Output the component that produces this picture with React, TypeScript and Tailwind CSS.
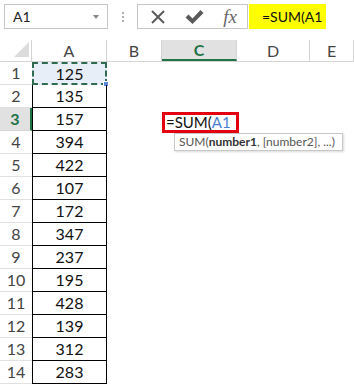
const values = [125, 135, 157, 394, 422, 107, 172, 347, 237, 195, 428, 139, 312, 283];

const font = { fontFamily: "Lato, 'Open Sans', sans-serif" };

const XIcon = () => (
  <svg width="16" height="16" viewBox="0 0 16 16" fill="none" stroke="#5a5a5a" strokeWidth="2">
    <path d="M2 2 L14 14 M14 2 L2 14" />
  </svg>
);

const CheckIcon = () => (
  <svg width="19" height="16" viewBox="0 0 19 16" fill="#5a5a5a">
    <path d="M0.5 8.5 L3.5 5.5 L7.5 9.5 L15.5 1 L18.5 4 L7.5 15 Z" />
  </svg>
);

const FormulaBar = () => (
  <div className="flex h-[40px] items-start pt-[4px] pl-[4px]">
    <div className="flex h-[25px] w-[104px] items-center justify-between border border-[#c6c6c6] pl-[8px] pr-[8px] text-[14px] text-[#222]">
      <span>A1</span>
      <span className="h-0 w-0 border-x-[3px] border-t-[4px] border-x-transparent border-t-[#888]" />
    </div>
    <div className="flex h-[25px] w-[29px] flex-col items-center justify-center gap-[2px]">
      <span className="h-[2px] w-[2px] bg-[#b0b0b0]" />
      <span className="h-[2px] w-[2px] bg-[#b0b0b0]" />
      <span className="h-[2px] w-[2px] bg-[#b0b0b0]" />
    </div>
    <div className="flex h-[25px] w-[111px] items-center justify-between border border-[#c6c6c6] pl-[12px] pr-[10px]">
      <XIcon />
      <CheckIcon />
      <span className="text-[19px] italic leading-none text-[#666]" style={{ fontFamily: "'Liberation Serif', serif" }}>
        fx
      </span>
    </div>
    <div className="ml-[1px] flex h-[25px] w-[77px] items-center bg-[#ffff00] pl-[13px] text-[14px] text-[#111]">
      =SUM(A1
    </div>
  </div>
);

const colHeaders = [
  { l: "A", w: "w-[75px]" },
  { l: "B", w: "w-[55px]" },
  { l: "C", w: "w-[75px]" },
  { l: "D", w: "w-[73px]" },
  { l: "E", w: "w-[44px]" },
];

const HeaderRow = () => (
  <div className="flex h-[22px] border-b border-[#d4d4d4]">
    <div className="relative w-[32px] border-r border-[#d4d4d4]">
      <div className="absolute bottom-[4px] right-[2px] h-0 w-0 border-b-[15px] border-l-[15px] border-b-[#dcdcdc] border-l-transparent" />
    </div>
    {colHeaders.map((c) =>
      c.l === "C" ? (
        <div
          key={c.l}
          className={`${c.w} flex items-center justify-center border-b-2 border-r border-[#217346] border-r-[#d4d4d4] bg-[#e1e1e1] text-[16px] font-bold text-[#217346]`}
        >
          {c.l}
        </div>
      ) : (
        <div
          key={c.l}
          className={`${c.w} flex items-center justify-center border-r border-[#d4d4d4] text-[16px] text-[#444]`}
        >
          {c.l}
        </div>
      )
    )}
  </div>
);

export default function App() {
  return (
    <div className="h-[389px] w-[354px] overflow-hidden bg-white" style={font}>
      <FormulaBar />
      <HeaderRow />
      {values.map((v, i) => {
        const n = i + 1;
        const active = n === 3;
        const sel = n === 1;
        return (
          <div key={n} className="relative flex h-[23px]">
            <div
              className={
                active
                  ? "flex w-[32px] items-center justify-center border-b border-r-2 border-[#d4d4d4] border-r-[#217346] bg-[#e1e1e1] text-[16px] font-bold text-[#217346]"
                  : "flex w-[32px] items-center justify-center border-b border-[#e1e1e1] text-[16px] text-[#444]"
              }
            >
              {n}
            </div>
            {sel ? (
              <div className="relative flex w-[75px] items-center justify-center border-2 border-dashed border-[#2f6b4f] bg-[#e8eef8] text-[16px] text-[#111]">
                {v}
                <span className="absolute -bottom-[4px] -right-[4px] h-[6px] w-[6px] border border-white bg-[#5b8bd8]" />
              </div>
            ) : (
              <div className="flex w-[75px] items-center justify-center border-x border-b border-black text-[16px] text-[#111]">
                {v}
              </div>
            )}
            {active && (
              <>
                <div className="absolute left-[162px] top-[4px] flex h-[21px] w-[77px] items-center whitespace-nowrap border-[3px] border-[#e3000f] bg-white pl-[1px] text-[15px] leading-none text-[#111]">
                  =SUM(<span className="text-[#4a7fd6]">A1</span>
                </div>
                <div className="absolute left-[174px] top-[25px] z-10 flex h-[18px] w-[169px] items-center whitespace-nowrap border border-[#c8c8c8] bg-white pl-[4px] text-[12px] text-[#555] shadow-[1px_1px_2px_rgba(0,0,0,0.15)]">
                  SUM(<b className="text-[#333]">number1</b>, [number2], ...)
                </div>
              </>
            )}
          </div>
        );
      })}
    </div>
  );
}
